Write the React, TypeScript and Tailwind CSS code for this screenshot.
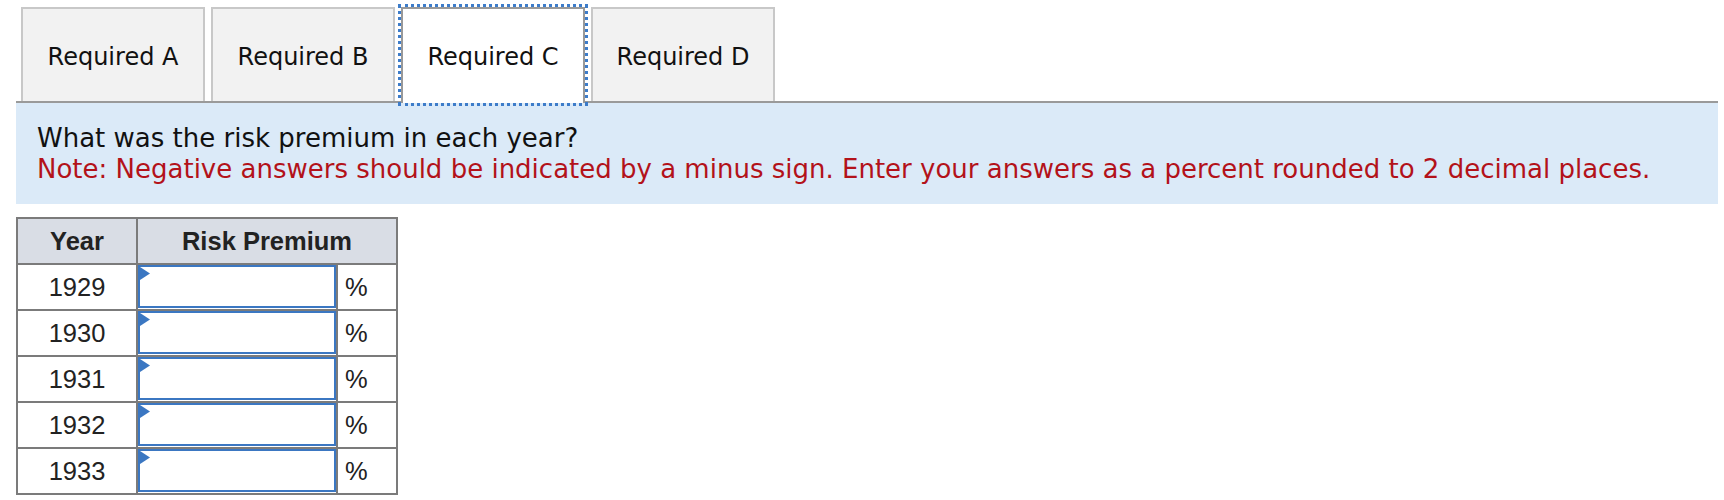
const tabs = ["Required A", "Required B", "Required C", "Required D"];
const years = ["1929", "1930", "1931", "1932", "1933"];

function AnswerInput() {
  return (
    <div className="relative h-[43px] w-full border-2 border-[#3b77c2] bg-white">
      <svg className="absolute left-0 top-0" width="10" height="13" viewBox="0 0 10 13">
        <polygon points="0,0 10,6.5 0,13" fill="#3b77c2" />
      </svg>
    </div>
  );
}

export default function App() {
  return (
    <div className="min-h-[500px] bg-white pl-4 pr-[6px] pt-[7px] font-['DejaVu_Sans',sans-serif]">
      <div className="flex gap-[6px] border-b-2 border-[#9a9a9a] pl-[5px]">
        {tabs.map((tab) => {
          const active = tab === "Required C";
          return (
            <div
              key={tab}
              className={
                active
                  ? "relative z-10 -mb-[2px] flex h-[96px] w-[184px] items-center justify-center border-2 border-b-0 border-[#999] bg-white pt-[2px] text-[24px] text-[#111] outline-[3px] outline-dotted outline-[#3d7cc9]"
                  : "flex h-[94px] w-[184px] items-center justify-center border-2 border-b-0 border-[#c8c8c8] bg-[#f2f2f2] pt-[4px] text-[24px] text-[#111]"
              }
            >
              {tab}
            </div>
          );
        })}
      </div>

      <div className="bg-[#dbeaf8] pb-[19px] pl-[21px] pt-[20px] text-[26px] leading-[31px]">
        <p className="text-[#111]">What was the risk premium in each year?</p>
        <p className="text-[#b3121a]">
          Note: Negative answers should be indicated by a minus sign. Enter your answers as a percent rounded to 2 decimal places.
        </p>
      </div>

      <table className="mt-[13px] border-collapse border-2 border-[#7b7b7b] font-['Liberation_Sans',Arial,sans-serif] text-[25.5px] text-[#222]">
        <thead>
          <tr className="bg-[#d9dde5]">
            <th className="h-[46px] w-[120px] border-2 border-[#7b7b7b] p-0 text-center font-bold">Year</th>
            <th colSpan={2} className="h-[46px] border-2 border-[#7b7b7b] p-0 text-center font-bold">
              Risk Premium
            </th>
          </tr>
        </thead>
        <tbody>
          {years.map((year) => (
            <tr key={year}>
              <td className="h-[46px] w-[120px] border-2 border-[#7b7b7b] p-0 text-center">{year}</td>
              <td className="h-[46px] w-[200px] border-2 border-[#7b7b7b] p-0 align-top">
                <AnswerInput />
              </td>
              <td className="h-[46px] w-[60px] border-2 border-[#7b7b7b] py-0 pl-[7px] pr-0 text-left">%</td>
            </tr>
          ))}
        </tbody>
      </table>
    </div>
  );
}
